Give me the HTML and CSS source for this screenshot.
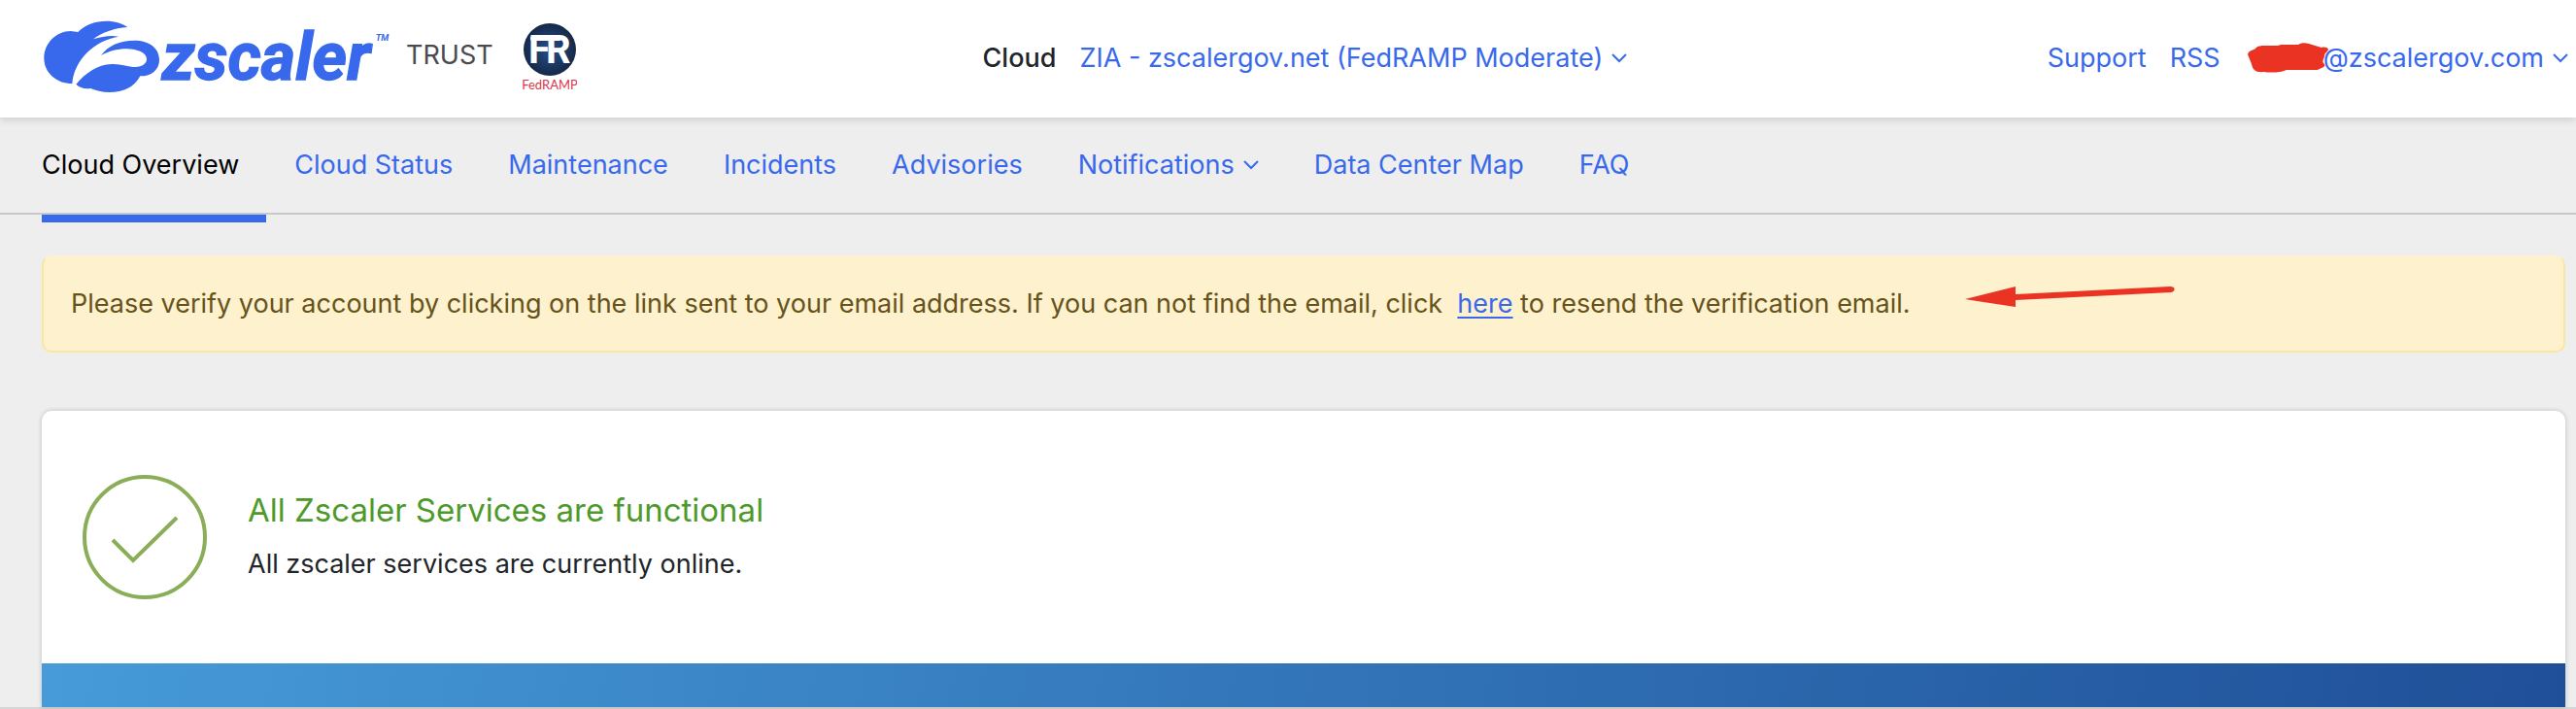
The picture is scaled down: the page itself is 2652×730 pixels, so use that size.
FILE: index.html
```html
<!DOCTYPE html>
<html lang="en">
<head>
<meta charset="utf-8">
<meta name="viewport" content="width=device-width, initial-scale=1">
<title>Zscaler Trust - Cloud Overview</title>
<link rel="stylesheet" href="styles.css">
</head>
<body>
<header class="header">
  <a class="brand" href="#">
    <svg class="brand-logo" viewBox="39 24 1086 252" role="img" aria-label="Zscaler">
      <path d="M133 228C85 228 46 195 46 149C46 103 85 66 128 66L151 69C174 45 205 35 238 35C265 35 290 43 304 54C262 57 226 70 198 91C225 82 255 78 276 83C205 95 140 150 133 228Z"/>
      <path d="M222 141C245 110 280 95 325 95C372 95 402 119 402 155C402 187 375 206 343 205C325 240 290 255 248 255C225 255 205 249 190 243C170 246 155 240 145 230C175 195 210 170 255 168C285 167 305 177 328 177C350 176 363 166 363 152C362 132 335 122 302 121C270 121 245 129 222 141Z"/>
      <text class="wordmark" x="411" y="216">zscaler</text>
      <text class="trademark" x="1070" y="97">TM</text>
    </svg>
    <span class="brand-name">TRUST</span>
    <svg class="fedramp" viewBox="0 0 56 72" role="img" aria-label="FedRAMP">
      <defs>
        <radialGradient id="badge"><stop offset="0" stop-color="#24508c"/><stop offset="1" stop-color="#162947"/></radialGradient>
      </defs>
      <circle cx="28" cy="27" r="27" fill="url(#badge)"/>
      <rect x="8" y="13" width="32" height="5" rx="2" fill="#fff"/>
      <text class="fedramp-mark"><tspan x="6" y="41">F</tspan><tspan x="24" y="41">R</tspan></text>
      <text class="fedramp-name" x="28" y="68">FedRAMP</text>
    </svg>
  </a>
  <div class="cloud">
    <label class="cloud-label" for="cloud">Cloud</label>
    <span class="with-chevron">
      <select class="cloud-select" id="cloud"><option>ZIA - zscalergov.net (FedRAMP Moderate)</option></select>
      <svg class="chevron" viewBox="0 0 16 10" aria-hidden="true"><path d="M1 1L8 8L15 1"/></svg>
    </span>
  </div>
  <div class="account">
    <a class="link" href="#">Support</a>
    <a class="link" href="#">RSS</a>
    <button class="user with-chevron" type="button" aria-haspopup="true">
      <span class="user-mail"><svg class="redaction" viewBox="0 0 84 32" aria-hidden="true"><path d="M0 12C1 8 5 8 8 6C10 3 14 3 18 3L31 3L34 2L52 2C55 0 59 0 63 1L76 5C79 4 83 5 83 7C82 10 79 10 79 14C78 18 76 19 79 22C81 25 75 26 72 28L40 28C33 31 25 31 16 30C9 31 5 28 4 22Z"/></svg>@zscalergov.com</span>
      <svg class="chevron" viewBox="0 0 16 10" aria-hidden="true"><path d="M1 1L8 8L15 1"/></svg>
    </button>
  </div>
</header>
<nav class="nav">
  <a class="tab tab-active" href="#" aria-current="page">Cloud Overview</a>
  <a class="tab" href="#">Cloud Status</a>
  <a class="tab" href="#">Maintenance</a>
  <a class="tab" href="#">Incidents</a>
  <a class="tab" href="#">Advisories</a>
  <button class="tab with-chevron" type="button" aria-haspopup="true">Notifications
    <svg class="chevron" viewBox="0 0 16 10" aria-hidden="true"><path d="M1 1L8 8L15 1"/></svg>
  </button>
  <a class="tab" href="#">Data Center Map</a>
  <a class="tab" href="#">FAQ</a>
</nav>
<main class="main">
  <div class="alert" role="alert">
    <p class="alert-text">Please verify your account by clicking on the link sent to your email address. If you can not find the email, click&nbsp; <a class="alert-link" href="#">here</a> to resend the verification email.</p>
    <svg class="arrow" viewBox="0 0 216 36" aria-hidden="true"><path d="M0 13L52 0V8L211 0C217 0 217 5 212 6L52 14V21Z"/></svg>
  </div>
  <section class="card">
    <div class="status">
      <svg class="status-icon" viewBox="0 0 128 128" aria-hidden="true"><circle cx="64" cy="64" r="62"/><path d="M31 67L52 88L97 44"/></svg>
      <div class="status-body">
        <h1 class="status-title">All Zscaler Services are functional</h1>
        <p class="status-text">All zscaler services are currently online.</p>
      </div>
    </div>
    <div class="banner"></div>
  </section>
</main>
</body>
</html>
```

FILE: styles.css
```css
* { box-sizing: border-box; }

body {
  margin: 0;
  background: #eee;
  color: #212529;
  font: 27px/42px Inter, "Liberation Sans", sans-serif;
}

a { color: #3869ec; text-decoration: none; }

button, select {
  margin: 0;
  padding: 0;
  border: 0;
  background: none;
  color: #3869ec;
  font: inherit;
  appearance: none;
}

.header {
  position: relative;
  display: grid;
  grid-template-columns: 1fr auto 1fr;
  align-items: center;
  min-height: 121px;
  padding: 0 8px 2px 43px;
  background: #fff;
  box-shadow: 0 2px 8px rgba(0, 0, 0, 0.15);
}

.brand { display: flex; align-items: center; }
.brand-logo { width: 362px; height: 84px; fill: #3869ec; }
.wordmark { font: italic 700 204px Roboto, sans-serif; stroke: #3869ec; stroke-width: 4px; }
.trademark { font: italic 700 28px Roboto, sans-serif; }
.brand-name { margin: 0 30px 6px 13px; color: #4a4a4f; }
.fedramp { width: 56px; height: 72px; }
.fedramp-mark { font: 700 40px Roboto, sans-serif; fill: #fff; }
.fedramp-name { font: 13px Lato, sans-serif; fill: #d9384c; text-anchor: middle; }

.cloud { display: flex; gap: 24px; }
.cloud-label { font-weight: 500; }

.with-chevron { display: flex; align-items: center; gap: 9px; }
.chevron { width: 16px; height: 10px; fill: none; stroke: #3869ec; stroke-width: 2px; }

.account { display: flex; justify-content: flex-end; gap: 24px; }
.user { margin-left: 4px; }
.user-mail { display: flex; align-items: center; }
.redaction { position: relative; width: 84px; height: 32px; margin-right: -6px; fill: #ea3323; }

.nav {
  display: flex;
  gap: 29px;
  padding-left: 43px;
  border-bottom: 2px solid #c8c8c8;
}
.tab { position: relative; padding: 28px 28px 28px 0; }
.tab-active { color: #000; }
.tab-active::after {
  content: "";
  position: absolute;
  top: calc(100% + 2px);
  left: 0;
  width: 100%;
  height: 8px;
  background: #3869ec;
}

.main {
  padding: 42px 11px 0 43px;
  border-bottom: 2px solid #d6d6d6;
}

.alert {
  display: flex;
  align-items: center;
  gap: 56px;
  min-height: 100px;
  margin-bottom: 60px;
  padding: 0 28px;
  border: 2px solid #fce69f;
  border-top-color: #fdf1ce;
  border-radius: 10px;
  background: #fdf1ce;
  color: #67521a;
}
.alert-text { margin: 0; }
.alert-link { text-decoration: underline; text-decoration-thickness: 2px; text-underline-offset: 4px; }
.arrow { flex: none; width: 216px; height: 36px; fill: #ea3323; }

.card {
  border-radius: 10px 10px 0 0;
  background: #fff;
  box-shadow: 0 0 5px rgba(0, 0, 0, 0.2);
}
.status { display: flex; align-items: center; gap: 42px; padding: 66px 42px; }
.status-icon {
  width: 128px;
  height: 128px;
  fill: none;
  stroke: #8aae57;
  stroke-width: 4px;
}
.status-body { display: grid; gap: 14px; }
.status-title { margin: 0; color: #4d9a2a; font-size: 33px; font-weight: 400; }
.status-text { margin: 0; }
.banner { height: 45px; background: linear-gradient(100deg, #469bd8, #1f4f98); }
```
